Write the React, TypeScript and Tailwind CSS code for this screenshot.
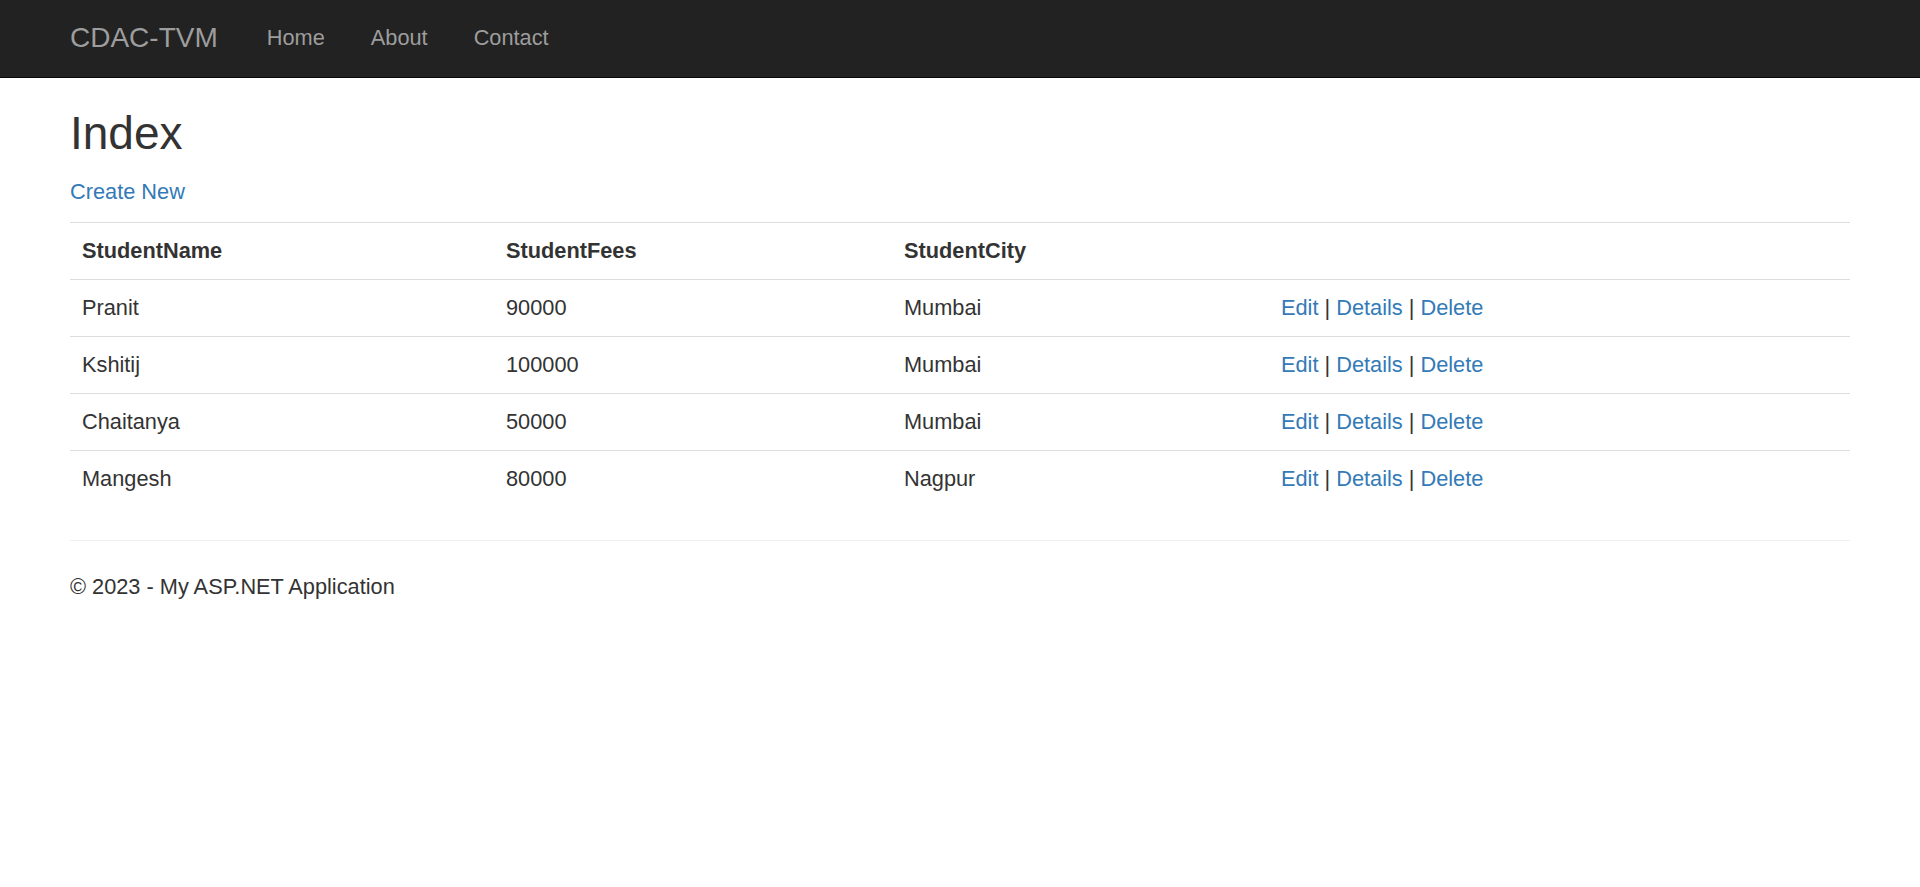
const students = [
  { name: "Pranit", fees: "90000", city: "Mumbai" },
  { name: "Kshitij", fees: "100000", city: "Mumbai" },
  { name: "Chaitanya", fees: "50000", city: "Mumbai" },
  { name: "Mangesh", fees: "80000", city: "Nagpur" },
]

const cols = "grid grid-cols-[424px_398px_377px_1fr]"

export default function App() {
  return (
    <div className="min-h-screen bg-white text-[#333] font-['Liberation_Sans',Arial,sans-serif] text-[21.75px]">
      {/* navbar */}
      <nav className="h-[78px] bg-[#222] border-b border-[#080808] flex items-center pl-[46px] pb-[2px]">
        <a href="#" className="pl-[24px] pr-[26px] text-[28px] leading-[30px] text-[#9d9d9d]">CDAC-TVM</a>
        <ul className="flex">
          {["Home", "About", "Contact"].map((item) => (
            <li key={item}>
              <a href="#" className="block px-[23px] leading-[30px] text-[#9d9d9d]">{item}</a>
            </li>
          ))}
        </ul>
      </nav>

      <main className="mx-[70px] pt-[30px]">
        <h2 className="text-[46px] leading-[50px] font-normal">Index</h2>
        <p className="mt-[19px] mb-[15px] leading-[30px]">
          <a href="#" className="text-[#337ab7]">Create New</a>
        </p>

        <div className="border-t border-[#ddd]">
          <div className={`${cols} border-b border-[#ddd] font-bold`}>
            <div className="px-[12px] py-[13px] leading-[30px]">StudentName</div>
            <div className="px-[12px] py-[13px] leading-[30px]">StudentFees</div>
            <div className="px-[12px] py-[13px] leading-[30px]">StudentCity</div>
            <div className="px-[12px] py-[13px] leading-[30px]"></div>
          </div>
          {students.map((s, i) => (
            <div key={s.name} className={`${cols} ${i < students.length - 1 ? "border-b border-[#ddd]" : ""}`}>
              <div className="px-[12px] py-[13px] leading-[30px]">{s.name}</div>
              <div className="px-[12px] py-[13px] leading-[30px]">{s.fees}</div>
              <div className="px-[12px] py-[13px] leading-[30px]">{s.city}</div>
              <div className="px-[12px] py-[13px] leading-[30px]">
                <a href="#" className="text-[#337ab7]">Edit</a> |{" "}
                <a href="#" className="text-[#337ab7]">Details</a> |{" "}
                <a href="#" className="text-[#337ab7]">Delete</a>
              </div>
            </div>
          ))}
        </div>

        <hr className="mt-[33px] border-t border-[#eee]" />
        <footer className="pt-[31px] leading-[30px]">
          <p>© 2023 - My ASP.NET Application</p>
        </footer>
      </main>
    </div>
  )
}
